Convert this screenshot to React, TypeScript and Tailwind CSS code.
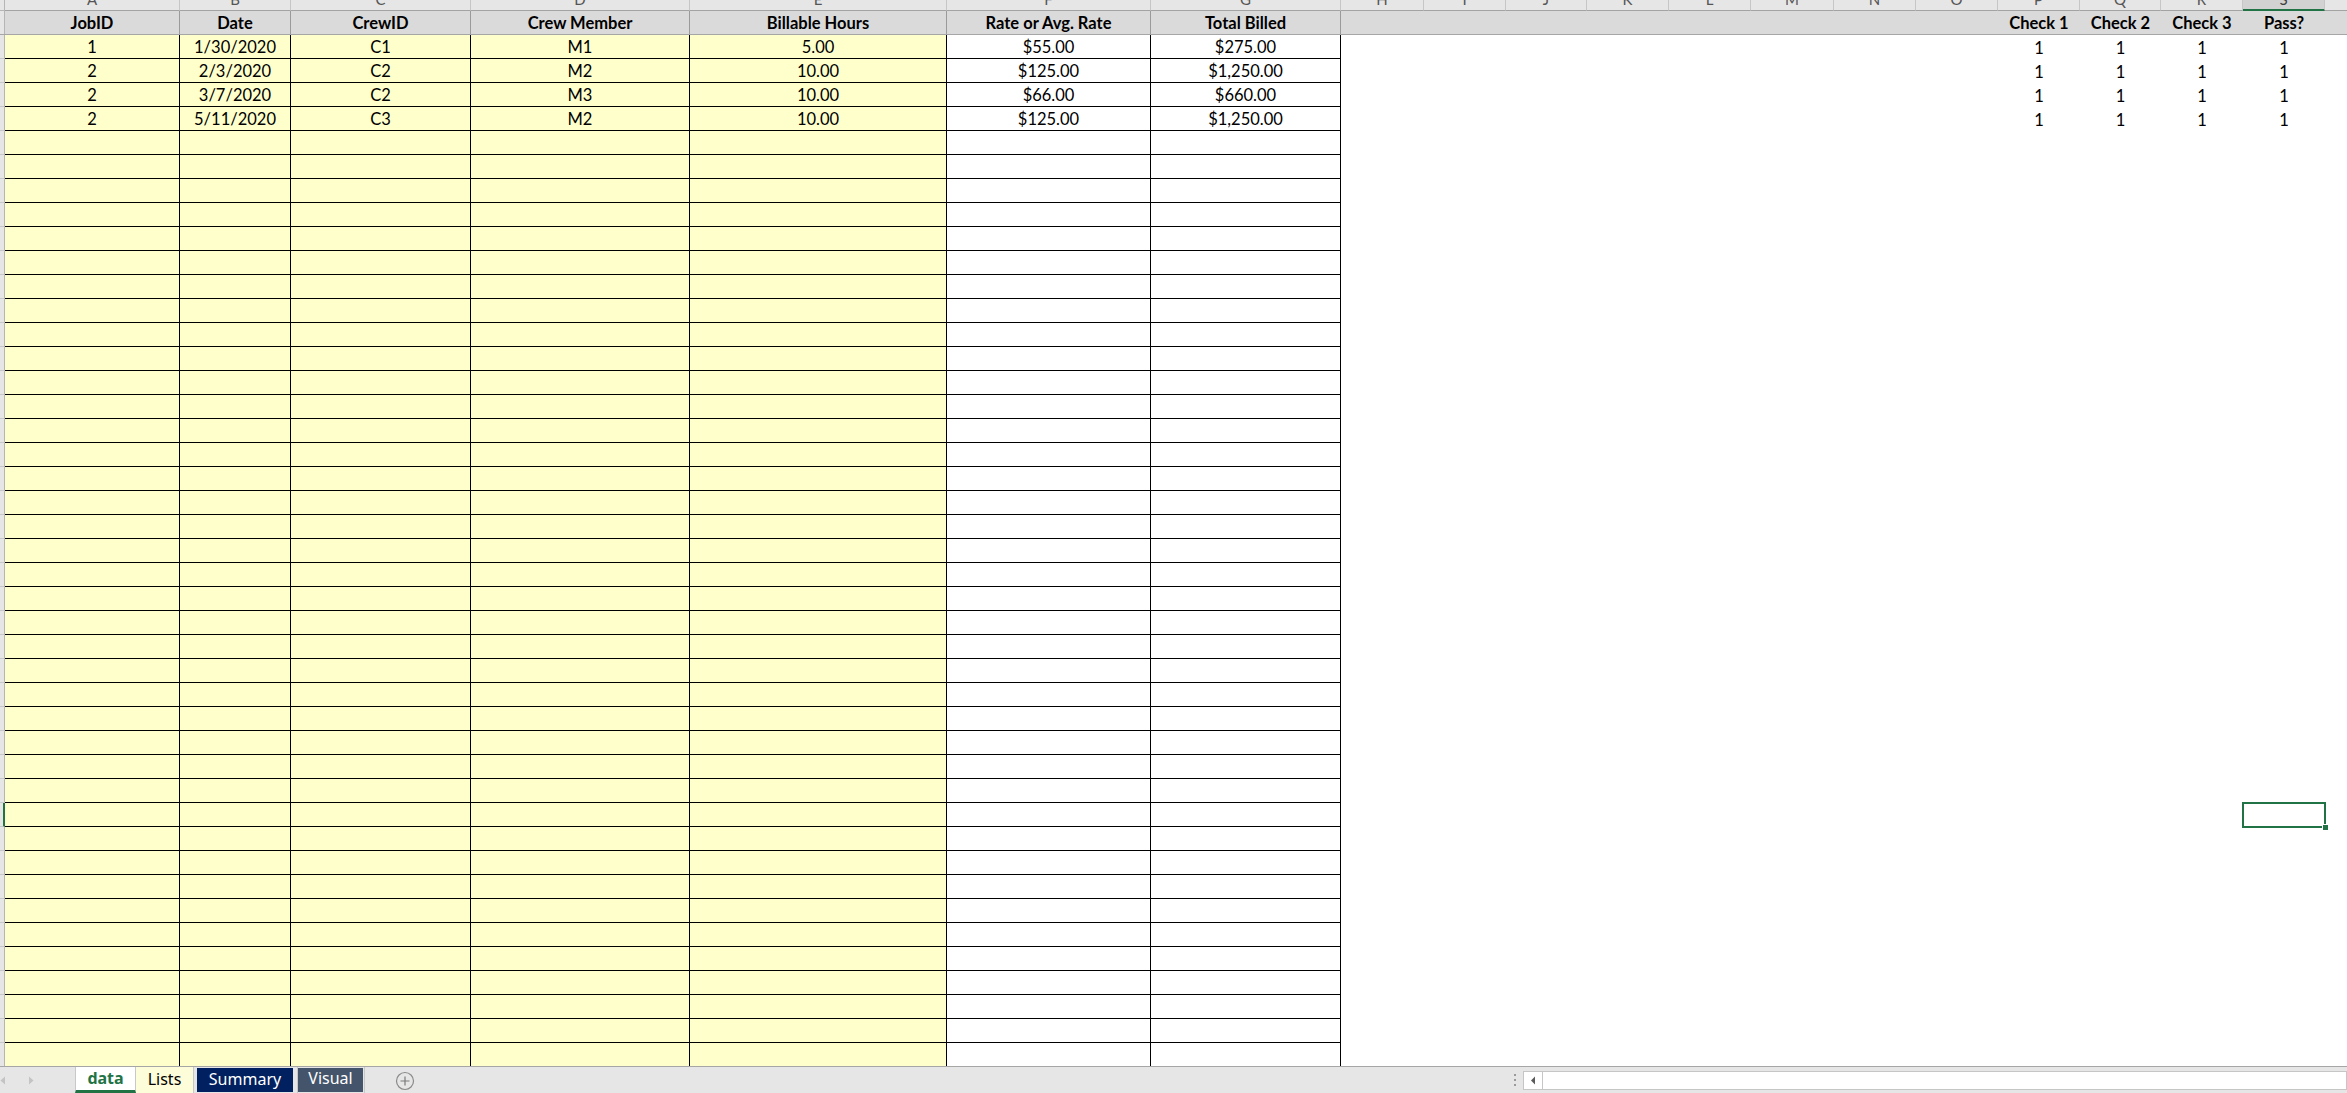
import React from 'react';

type Col = { key: string; w: string; fill: 'y' | 'w' | 'n' };

const COLS: Col[] = [
  { key: 'A', w: 'w-[175px]', fill: 'y' },
  { key: 'B', w: 'w-[111px]', fill: 'y' },
  { key: 'C', w: 'w-[180px]', fill: 'y' },
  { key: 'D', w: 'w-[219px]', fill: 'y' },
  { key: 'E', w: 'w-[257px]', fill: 'y' },
  { key: 'F', w: 'w-[204px]', fill: 'w' },
  { key: 'G', w: 'w-[190px]', fill: 'w' },
  { key: 'H', w: 'w-[83px]', fill: 'n' },
  { key: 'I', w: 'w-[82px]', fill: 'n' },
  { key: 'J', w: 'w-[81px]', fill: 'n' },
  { key: 'K', w: 'w-[82px]', fill: 'n' },
  { key: 'L', w: 'w-[82px]', fill: 'n' },
  { key: 'M', w: 'w-[83px]', fill: 'n' },
  { key: 'N', w: 'w-[82px]', fill: 'n' },
  { key: 'O', w: 'w-[82px]', fill: 'n' },
  { key: 'P', w: 'w-[82px]', fill: 'n' },
  { key: 'Q', w: 'w-[81px]', fill: 'n' },
  { key: 'R', w: 'w-[82px]', fill: 'n' },
  { key: 'S', w: 'w-[82px]', fill: 'n' },
  { key: 'T', w: 'w-[82px]', fill: 'n' },
];

const HEADERS: Record<string, string> = {
  A: 'JobID',
  B: 'Date',
  C: 'CrewID',
  D: 'Crew Member',
  E: 'Billable Hours',
  F: 'Rate or Avg. Rate',
  G: 'Total Billed',
  P: 'Check 1',
  Q: 'Check 2',
  R: 'Check 3',
  S: 'Pass?',
};

const DATA: string[][] = [
  ['1', '1/30/2020', 'C1', 'M1', '5.00', '$55.00', '$275.00'],
  ['2', '2/3/2020', 'C2', 'M2', '10.00', '$125.00', '$1,250.00'],
  ['2', '3/7/2020', 'C2', 'M3', '10.00', '$66.00', '$660.00'],
  ['2', '5/11/2020', 'C3', 'M2', '10.00', '$125.00', '$1,250.00'],
];

const CHECKS = ['P', 'Q', 'R', 'S'];
const ROWS = 43;
const SEL_ROW = 32;

function LetterRow() {
  return (
    <div className="flex h-[11px] shrink-0 bg-[#e6e6e6]">
      <div className="w-[5px] shrink-0 h-full border-r border-b border-[#b5b5b5]" />
      {COLS.map((c) =>
        c.key === 'S' ? (
          <div
            key={c.key}
            className={`${c.w} shrink-0 h-full overflow-hidden flex justify-center bg-[#d2d2d2] border-r border-[#c6c6c6] border-b-2 border-b-[#217346]`}
          >
            <span className="-mt-[8px] leading-[14px] text-[15px] text-[#3d3d3d]">{c.key}</span>
          </div>
        ) : (
          <div
            key={c.key}
            className={`${c.w} shrink-0 h-full overflow-hidden flex justify-center border-r border-[#c6c6c6] border-b border-b-[#a3a3a3]`}
          >
            <span className="-mt-[8px] leading-[14px] text-[15px] text-[#555555]">{c.key}</span>
          </div>
        )
      )}
    </div>
  );
}

function HeaderRow() {
  return (
    <div className="flex h-[24px] shrink-0 bg-[#dadada] border-b border-[#a6a6a6]">
      <div className="w-[5px] shrink-0 h-full bg-[#e6e6e6] border-r border-[#b5b5b5]" />
      {COLS.map((c) => (
        <div
          key={c.key}
          className={`${c.w} shrink-0 h-full flex items-center justify-center font-bold text-[16.5px] text-black whitespace-nowrap ${
            c.fill !== 'n' ? 'border-r border-[#9a9a9a]' : ''
          }`}
        >
          <span className="pt-[1px]">{HEADERS[c.key] ?? ''}</span>
        </div>
      ))}
    </div>
  );
}

function DataRow({ i }: { i: number }) {
  const row = DATA[i];
  return (
    <div className="flex h-[24px] shrink-0">
      {i === SEL_ROW ? (
        <div className="w-[5px] shrink-0 h-full bg-[#e6e6e6] border-b border-b-[#c8c8c8] border-r-2 border-r-[#217346]" />
      ) : (
        <div className="w-[5px] shrink-0 h-full bg-[#e6e6e6] border-b border-b-[#c8c8c8] border-r border-r-[#b5b5b5]" />
      )}
      {COLS.map((c, ci) => {
        let text = '';
        if (row && ci < 7) text = row[ci];
        if (row && CHECKS.includes(c.key)) text = '1';
        const base = `${c.w} shrink-0 h-full flex items-center justify-center text-[16.5px] text-black whitespace-nowrap`;
        if (c.fill === 'y')
          return (
            <div key={c.key} className={`${base} bg-[#ffffcc] border-r border-b border-black`}>
              <span className="pt-[2px]">{text}</span>
            </div>
          );
        if (c.fill === 'w')
          return (
            <div key={c.key} className={`${base} bg-white border-r border-b border-black`}>
              <span className="pt-[2px]">{text}</span>
            </div>
          );
        if (c.key === 'S' && i === SEL_ROW)
          return (
            <div key={c.key} className={`${base} relative bg-white`}>
              <div className="absolute -left-[1px] -top-[1px] -right-[1px] -bottom-[1px] border-2 border-[#217346]" />
              <div className="absolute -right-[4px] -bottom-[4px] w-[7px] h-[7px] bg-[#217346] border border-white" />
            </div>
          );
        return (
          <div key={c.key} className={`${base} bg-white`}>
            <span className="pt-[2px]">{text}</span>
          </div>
        );
      })}
    </div>
  );
}

function TabBar() {
  return (
    <div className="flex items-stretch h-[27px] shrink-0 bg-[#e6e6e6] border-t border-[#a6a6a6] [font-family:'Noto_Sans',sans-serif]">
      <div className="w-[75px] shrink-0 flex items-center">
        <svg width="6" height="9" viewBox="0 0 6 9">
          <path d="M5 0.5 L0.5 4.5 L5 8.5 Z" fill="#c4c4c4" />
        </svg>
        <svg width="6" height="9" viewBox="0 0 6 9" className="ml-[22px]">
          <path d="M1 0.5 L5.5 4.5 L1 8.5 Z" fill="#c4c4c4" />
        </svg>
      </div>
      <div className="w-[61px] shrink-0 bg-white border-x border-[#c8c8c8] border-b-[3px] border-b-[#217346] flex items-center justify-center">
        <span className="text-[16px] font-bold text-[#217346] leading-none -mt-[1px]">data</span>
      </div>
      <div className="w-[58px] shrink-0 bg-[#fdfdda] border-r border-[#c8c8c8] flex items-center justify-center">
        <span className="text-[16px] text-black leading-none -mt-[3px]">Lists</span>
      </div>
      <div className="w-[3px] shrink-0" />
      <div className="w-[96px] shrink-0 my-[1px] bg-[#002060] flex items-center justify-center">
        <span className="text-[16px] text-white leading-none -mt-[3px]">Summary</span>
      </div>
      <div className="w-[5px] shrink-0 border-r border-[#c8c8c8]" />
      <div className="w-[65px] shrink-0 my-[1px] bg-[#44546a] flex items-center justify-center">
        <span className="text-[16px] text-white leading-none -mt-[5px]">Visual</span>
      </div>
      <div className="w-[2px] shrink-0 border-r border-[#c8c8c8]" />
      <div className="w-[80px] shrink-0 flex items-center justify-center">
        <svg width="20" height="20" viewBox="0 0 20 20" className="mt-[2px]">
          <circle cx="10" cy="10" r="8.5" fill="none" stroke="#8a8a8a" strokeWidth="1.2" />
          <path d="M10 5.5 V14.5 M5.5 10 H14.5" stroke="#7a7a7a" strokeWidth="1.2" />
        </svg>
      </div>
      <div className="flex-1" />
      <div className="w-[16px] shrink-0 flex flex-col items-center justify-center gap-[3px]">
        <div className="w-[2px] h-[2px] bg-[#9a9a9a]" />
        <div className="w-[2px] h-[2px] bg-[#9a9a9a]" />
        <div className="w-[2px] h-[2px] bg-[#9a9a9a]" />
      </div>
      <div className="w-[824px] shrink-0 flex items-center">
        <div className="flex w-full h-[19px] bg-white border border-[#c6c6c6]">
          <div className="w-[19px] shrink-0 h-full border-r border-[#c6c6c6] flex items-center justify-center">
            <svg width="6" height="9" viewBox="0 0 6 9">
              <path d="M5 0.5 L1 4.5 L5 8.5 Z" fill="#5a5a5a" />
            </svg>
          </div>
          <div className="flex-1" />
        </div>
      </div>
    </div>
  );
}

export default function App() {
  return (
    <div className="w-[2347px] h-[1093px] overflow-hidden bg-white flex flex-col [font-family:Lato,sans-serif]">
      <div className="h-[1066px] shrink-0 overflow-hidden flex flex-col">
        <LetterRow />
        <HeaderRow />
        {Array.from({ length: ROWS }).map((_, i) => (
          <DataRow key={i} i={i} />
        ))}
      </div>
      <TabBar />
    </div>
  );
}
